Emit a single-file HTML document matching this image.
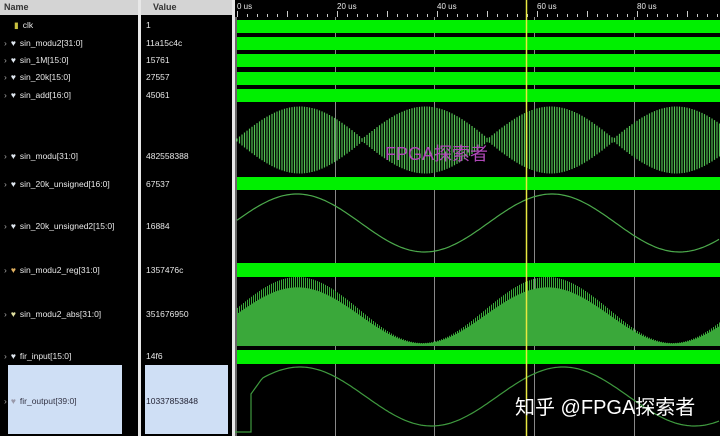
<!DOCTYPE html>
<html><head><meta charset="utf-8"><style>
body{margin:0;width:720px;height:436px;background:#000;overflow:hidden;position:relative;font-family:"Liberation Sans","Noto Sans CJK SC",sans-serif}
.a{position:absolute}
.hd{top:0;height:15px;background:#d4d4d4;color:#333;font-size:9px;font-weight:bold;line-height:15px}
.n{position:absolute;left:4px;color:#e8e8e8;font-size:8.5px;white-space:nowrap}
.n i{font-style:normal;color:#aaa;margin-right:4px}
.n b{color:#e0e8f0;font-weight:normal;margin-right:4px}
.v{position:absolute;left:146px;color:#e8e8e8;font-size:8.5px}
</style></head><body>
<div class="a hd" style="left:0;width:138px;padding-left:4px;box-sizing:border-box">Name</div>
<div class="a hd" style="left:141px;width:91px;padding-left:12px;box-sizing:border-box">Value</div>
<div class="a" style="left:138px;top:0;width:3px;height:436px;background:#e8e8e8"></div>
<div class="a" style="left:232px;top:0;width:3px;height:436px;background:#e8e8e8"></div>
<div class="a" style="left:8px;top:365px;width:114px;height:69px;background:#cfdff5"></div>
<div class="a" style="left:145px;top:365px;width:83px;height:69px;background:#cfdff5"></div>

<div class="n" style="top:20px;left:14px"><b style="color:#c8c040">▮</b>clk</div>
<div class="n" style="top:38px"><i>›</i><b>♥</b>sin_modu2[31:0]</div>
<div class="n" style="top:55px"><i>›</i><b>♥</b>sin_1M[15:0]</div>
<div class="n" style="top:72px"><i>›</i><b>♥</b>sin_20k[15:0]</div>
<div class="n" style="top:90px"><i>›</i><b>♥</b>sin_add[16:0]</div>
<div class="n" style="top:151px"><i>›</i><b>♥</b>sin_modu[31:0]</div>
<div class="n" style="top:179px"><i>›</i><b>♥</b>sin_20k_unsigned[16:0]</div>
<div class="n" style="top:221px"><i>›</i><b>♥</b>sin_20k_unsigned2[15:0]</div>
<div class="n" style="top:265px"><i>›</i><b style="color:#e0b060">♥</b>sin_modu2_reg[31:0]</div>
<div class="n" style="top:309px"><i>›</i><b style="color:#e0e0a0">♥</b>sin_modu2_abs[31:0]</div>
<div class="n" style="top:351px"><i>›</i><b>♥</b>fir_input[15:0]</div>
<div class="n" style="top:396px;color:#334"><i>›</i><b style="color:#99a">♥</b>fir_output[39:0]</div>

<div class="v" style="top:20px">1</div>
<div class="v" style="top:38px">11a15c4c</div>
<div class="v" style="top:55px">15761</div>
<div class="v" style="top:72px">27557</div>
<div class="v" style="top:90px">45061</div>
<div class="v" style="top:151px">482558388</div>
<div class="v" style="top:179px">67537</div>
<div class="v" style="top:221px">16884</div>
<div class="v" style="top:265px">1357476c</div>
<div class="v" style="top:309px">351676950</div>
<div class="v" style="top:351px">14f6</div>
<div class="v" style="top:396px;color:#223">10337853848</div>

<svg class="a" style="left:0;top:0" width="720" height="436" id="s">
<g fill="#e8e8e8" font-size="8" font-family="Liberation Sans">
<text x="237" y="9">0 us</text><text x="337" y="9">20 us</text><text x="437" y="9">40 us</text><text x="537" y="9">60 us</text><text x="637" y="9">80 us</text>
</g>
<g id="tk" stroke="#ccc" stroke-width="1"></g>
<g stroke="#888" stroke-width="1">
<line x1="335.5" y1="17" x2="335.5" y2="436"/><line x1="434.5" y1="17" x2="434.5" y2="436"/><line x1="534.5" y1="17" x2="534.5" y2="436"/><line x1="634.5" y1="17" x2="634.5" y2="436"/>
<line x1="236" y1="17" x2="236" y2="436" stroke="#ccc"/>
</g>
<g fill="#00f000">
<rect x="237" y="20" width="483" height="13"/><rect x="237" y="37" width="483" height="13"/><rect x="237" y="54" width="483" height="13"/><rect x="237" y="72" width="483" height="13"/><rect x="237" y="89" width="483" height="13"/>
<rect x="237" y="177" width="483" height="13"/><rect x="237" y="263" width="483" height="14"/><rect x="237" y="350" width="483" height="14"/>
</g>
<path id="m1" stroke="#52c052" stroke-width="1.2" fill="none"/>
<path id="m2" stroke="#3aa83a" stroke-width="1" fill="none"/>
<path id="p1" stroke="#4caa4c" stroke-width="1.2" fill="none"/>
<path id="p2" stroke="#3f9a3f" stroke-width="1.2" fill="none"/>
<line x1="526.5" y1="0" x2="526.5" y2="436" stroke="#e8e840" stroke-width="1.5"/>
<text x="385" y="160" fill="#b048b8" font-size="18" font-family="Liberation Sans,Noto Sans CJK SC">FPGA探索者</text>
<text x="515" y="414" fill="#fff" font-size="20" font-family="Liberation Sans,Noto Sans CJK SC">知乎 @FPGA探索者</text>
</svg>
<script>
var P=Math.PI,d='',t='';
for(var x=237;x<720;x+=10){t+='<line x1="'+(x+.5)+'" y1="'+(x%50==37?11:14)+'" x2="'+(x+.5)+'" y2="17"/>';}
document.getElementById('tk').innerHTML=t;
for(var x=237;x<720;x+=2.5){var e=Math.abs(Math.sin(P*(x-237)/125.5))*32+1.5;d+='M'+x+' '+(140-e)+'V'+(140+e);}
document.getElementById('m1').setAttribute('d',d);d='';
for(var x=237;x<720;x+=1){var e=33*(1+Math.cos(2*P*(x-297)/250))+3;var h=(x%2)?e:e*0.85;d+='M'+(x+.5)+' 346V'+(346-h);}
document.getElementById('m2').setAttribute('d',d);d='';
for(var x=237;x<=720;x+=2){d+=(x==237?'M':'L')+x+' '+(223-29*Math.cos(2*P*(x-297)/255)).toFixed(1);}
document.getElementById('p1').setAttribute('d',d);
d='M235 432L251 432L251 394';
for(var x=251;x<=720;x+=2){var y=396.5-29.5*Math.cos(2*P*(x-300)/263);if(x<272)y=Math.max(y,394-(x-251)*1.4);d+='L'+x+' '+y.toFixed(1);}
document.getElementById('p2').setAttribute('d',d);
</script>
</body></html>
